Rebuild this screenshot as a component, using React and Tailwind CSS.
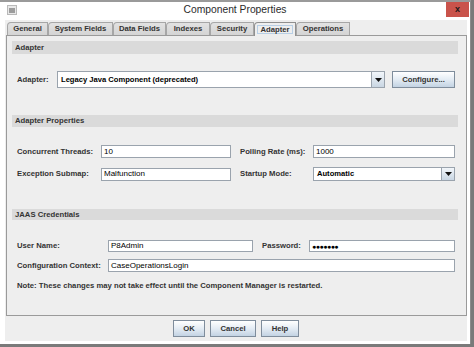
import React from "react";

const Lbl = ({ w, children, className = "" }) => (
  <div className={`shrink-0 font-bold text-[#333333] text-[7.7px] leading-none whitespace-nowrap ${w} ${className}`}>{children}</div>
);

const Field = ({ w, h = "h-[13px]", children }) => (
  <div className={`shrink-0 ${w} ${h} bg-white border border-[#9aa3ad] flex items-center pl-[2px] text-black text-[8px] leading-none whitespace-nowrap`}>
    {children}
  </div>
);

const Arrow = () => (
  <div className="w-[13px] h-full border-l border-[#9aa3ad] bg-gradient-to-b from-[#f2f6fa] to-[#c9d6e3] flex items-center justify-center">
    <svg width="7" height="4" viewBox="0 0 7 4"><path d="M0 0H7L3.5 4Z" fill="#111" /></svg>
  </div>
);

const Combo = ({ w, h, children }) => (
  <div className={`shrink-0 ${w} ${h} bg-white border border-[#9aa3ad] flex items-stretch`}>
    <div className="flex-1 flex items-center pl-[3px] font-bold text-[7.6px] text-black leading-none whitespace-nowrap">{children}</div>
    <Arrow />
  </div>
);

const Bar = ({ h = "h-[12px]", mt, children }) => (
  <div className={`ml-[5px] w-[446px] ${h} ${mt} bg-[#dadada] flex items-center pl-[3px] font-bold text-[7.7px] text-[#333333] leading-none`}>
    {children}
  </div>
);

const Btn = ({ w, children, className = "" }) => (
  <div className={`${w} h-[17px] border border-[#7f8d9c] bg-gradient-to-b from-[#ffffff] via-[#e4ecf4] to-[#c3d3e3] flex items-center justify-center font-bold text-[7.7px] text-[#333333] leading-none ${className}`}>
    {children}
  </div>
);

const tabs = [
  ["General", "w-[41px]"],
  ["System Fields", "w-[65px]"],
  ["Data Fields", "w-[53px]"],
  ["Indexes", "w-[44px]"],
  ["Security", "w-[44px]"],
  ["Adapter", "w-[42px]"],
  ["Operations", "w-[54px]"],
];

export default function App() {
  return (
    <div className="w-[474px] h-[347px] bg-[#7a7a7a] overflow-hidden font-['Liberation_Sans',Arial,sans-serif]">
      <div className="w-[471px] h-[344px] bg-white border-t-2 border-t-[#9a9a9a] border-r border-r-[#8c8c8c] flex flex-col">
        {/* title bar */}
        <div className="h-[18px] grid grid-cols-[1fr_auto_1fr] items-start">
          <div className="pl-[7px] pt-[3px]">
            <div className="w-[10px] h-[10px] border border-[#b9b9b9] bg-[#e8e8e8] flex items-end justify-center">
              <div className="w-[6px] h-[5px] bg-[#9c9c9c] mb-[1px]" />
            </div>
          </div>
          <div className="pt-[3px] text-[10.3px] leading-none text-[#2b2b2b]">Component Properties</div>
          <div className="flex justify-end pr-[1px]">
            <div className="w-[23px] h-[15px] bg-[#c9534b] flex items-center justify-center text-[9px] font-bold text-[#1a1a1a] leading-none">x</div>
          </div>
        </div>

        {/* client */}
        <div className="ml-[5px] w-[462px] h-[321px] bg-[#eeeeee] flex flex-col">
          {/* tabs */}
          <div className="mt-[1px] ml-[2px] h-[14px] flex items-end">
            {tabs.map(([t, w]) =>
              t === "Adapter" ? (
                <div key={t} className={`${w} h-[14px] bg-[#eeeeee] border border-b-0 border-[#8f8f8f] rounded-tl-[4px] flex items-center justify-center font-bold text-[7.7px] text-[#333333] leading-none relative z-10 -mb-[1px]`}>
                  <span className="px-[2px] border border-[#b8cfe5]">{t}</span>
                </div>
              ) : (
                <div key={t} className={`${w} h-[13px] bg-gradient-to-b from-[#e2e2e2] to-[#d4d4d4] border border-b-0 border-[#a6a6a6] rounded-tl-[4px] flex items-center justify-center font-bold text-[7.7px] text-[#333333] leading-none`}>
                  {t}
                </div>
              )
            )}
          </div>

          {/* panel */}
          <div className="ml-[1px] w-[461px] h-[281px] border border-[#9a9a9a] flex flex-col">
            <Bar mt="mt-[5px]" h="h-[13px]">Adapter</Bar>

            <div className="mt-[17px] h-[17px] pl-[10px] flex items-center">
              <Lbl w="w-[40px]">Adapter:</Lbl>
              <Combo w="w-[328px]" h="h-[17px]">Legacy Java Component (deprecated)</Combo>
              <Btn w="w-[63px]" className="ml-[7px]">Configure...</Btn>
            </div>

            <Bar mt="mt-[27px]">Adapter Properties</Bar>

            <div className="mt-[18px] h-[13px] pl-[10px] flex items-center">
              <Lbl w="w-[84px]">Concurrent Threads:</Lbl>
              <Field w="w-[130px]">10</Field>
              <Lbl w="w-[73px]" className="ml-[9px]">Polling Rate (ms):</Lbl>
              <Field w="w-[142px]">1000</Field>
            </div>

            <div className="mt-[9px] h-[14px] pl-[10px] flex items-center">
              <Lbl w="w-[84px]">Exception Submap:</Lbl>
              <Field w="w-[130px]" h="h-[13px]">Malfunction</Field>
              <Lbl w="w-[73px]" className="ml-[9px]">Startup Mode:</Lbl>
              <Combo w="w-[142px]" h="h-[14px]">Automatic</Combo>
            </div>

            <Bar mt="mt-[28px]" h="h-[11px]">JAAS Credentials</Bar>

            <div className="mt-[20px] h-[12px] pl-[10px] flex items-center">
              <Lbl w="w-[91px]">User Name:</Lbl>
              <Field w="w-[145px]" h="h-[12px]">P8Admin</Field>
              <Lbl w="w-[47px]" className="ml-[9px]">Password:</Lbl>
              <Field w="w-[146px]" h="h-[12px]">
                <span className="text-[7px] tracking-[-0.5px]">●●●●●●●</span>
              </Field>
            </div>

            <div className="mt-[7px] h-[13px] pl-[10px] flex items-center">
              <Lbl w="w-[91px]">Configuration Context:</Lbl>
              <Field w="w-[347px]">CaseOperationsLogin</Field>
            </div>

            <div className="mt-[8px] h-[12px] pl-[10px] flex items-center">
              <Lbl w="w-auto">Note: These changes may not take effect until the Component Manager is restarted.</Lbl>
            </div>
          </div>

          {/* buttons */}
          <div className="flex-1 flex items-center justify-center gap-[5px]">
            <Btn w="w-[32px]">OK</Btn>
            <Btn w="w-[46px]">Cancel</Btn>
            <Btn w="w-[38px]">Help</Btn>
          </div>
        </div>
      </div>
    </div>
  );
}
